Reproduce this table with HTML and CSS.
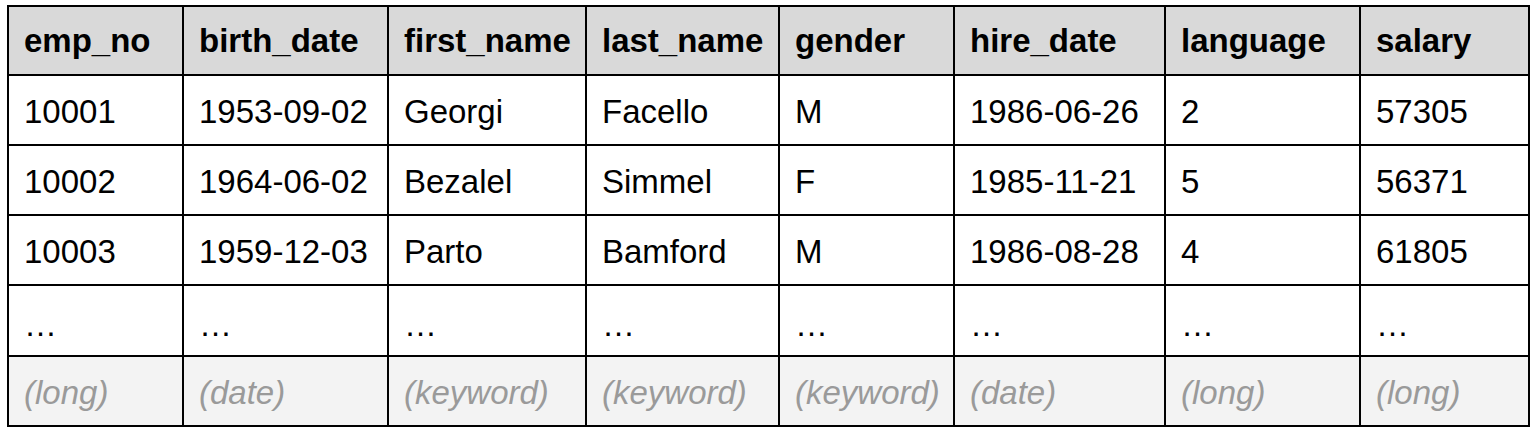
FILE: index.html
```html
<!DOCTYPE html>
<html>
<head>
<meta charset="utf-8">
<link rel="stylesheet" href="styles.css">
</head>
<body>
<table class="emp">
  <colgroup>
    <col class="c1"><col class="c2"><col class="c3"><col class="c4"><col class="c5"><col class="c6"><col class="c7"><col class="c8">
  </colgroup>
  <thead>
    <tr class="head">
      <th>emp_no</th><th>birth_date</th><th>first_name</th><th>last_name</th><th>gender</th><th>hire_date</th><th>language</th><th>salary</th>
    </tr>
  </thead>
  <tbody>
    <tr><td>10001</td><td>1953-09-02</td><td>Georgi</td><td>Facello</td><td>M</td><td>1986-06-26</td><td>2</td><td>57305</td></tr>
    <tr><td>10002</td><td>1964-06-02</td><td>Bezalel</td><td>Simmel</td><td>F</td><td>1985-11-21</td><td>5</td><td>56371</td></tr>
    <tr><td>10003</td><td>1959-12-03</td><td>Parto</td><td>Bamford</td><td>M</td><td>1986-08-28</td><td>4</td><td>61805</td></tr>
    <tr class="more"><td>…</td><td>…</td><td>…</td><td>…</td><td>…</td><td>…</td><td>…</td><td>…</td></tr>
    <tr class="types"><td>(long)</td><td>(date)</td><td>(keyword)</td><td>(keyword)</td><td>(keyword)</td><td>(date)</td><td>(long)</td><td>(long)</td></tr>
  </tbody>
</table>
</body>
</html>
```

FILE: styles.css
```css
html, body {
  margin: 0;
  padding: 0;
  background: #ffffff;
}

body {
  padding: 5px 0 0 7px;
  font-family: "Liberation Sans", Arial, sans-serif;
}

.emp {
  border-collapse: collapse;
  table-layout: fixed;
  width: 1521px;
  font-size: 33px;
  color: #000;
}

.c1 { width: 175px; }
.c2 { width: 205px; }
.c3 { width: 198px; }
.c4 { width: 193px; }
.c5 { width: 175px; }
.c6 { width: 211px; }
.c7 { width: 195px; }
.c8 { width: 169px; }

.emp th,
.emp td {
  border: 2px solid #000;
  padding: 0 0 0 15px;
  text-align: left;
  vertical-align: middle;
  white-space: nowrap;
  overflow: hidden;
  line-height: 38px;
}

.emp th {
  background: #d9d9d9;
  font-weight: bold;
  height: 66px;
  padding-top: 1px;
}

.emp td {
  height: 65px;
  padding-top: 3px;
}

.emp .more td {
  height: 61px;
  padding-top: 8px;
}

.emp .types td {
  background: #f3f3f3;
  color: #9a9a9a;
  font-style: italic;
}
```
